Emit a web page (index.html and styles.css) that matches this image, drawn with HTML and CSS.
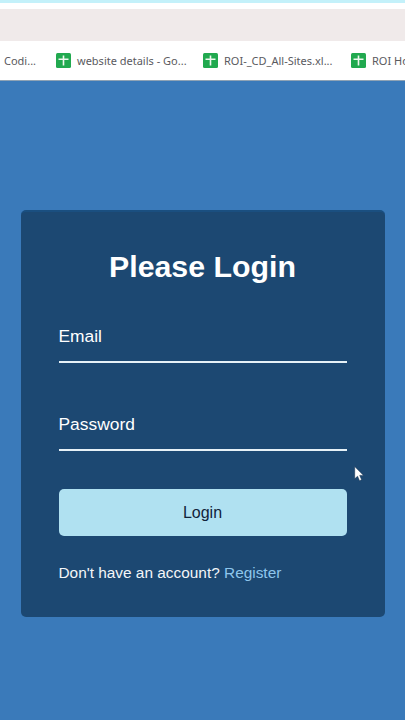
FILE: index.html
```html
<!DOCTYPE html>
<html lang="en">
<head>
<meta charset="utf-8">
<title>Please Login</title>
<link rel="stylesheet" href="styles.css">
</head>
<body>
<div class="chrome">
  <div class="strip"></div>
  <div class="address"></div>
  <div class="bookmarks">
    <span class="bm first"><span class="bm-text">Codi...</span></span>
    <span class="bm"><svg class="sheet" viewBox="0 0 15 15"><rect width="15" height="15" rx="1.5" fill="#21a94f"/><path d="M6.7 2.5h1.6v3h4.2v1.6H8.3v5.4H6.7V7.1H2.5V5.5h4.2z" fill="#eef7ee"/></svg><span class="bm-text">website details - Go...</span></span>
    <span class="bm"><svg class="sheet" viewBox="0 0 15 15"><rect width="15" height="15" rx="1.5" fill="#21a94f"/><path d="M6.7 2.5h1.6v3h4.2v1.6H8.3v5.4H6.7V7.1H2.5V5.5h4.2z" fill="#eef7ee"/></svg><span class="bm-text">ROI-_CD_All-Sites.xl...</span></span>
    <span class="bm"><svg class="sheet" viewBox="0 0 15 15"><rect width="15" height="15" rx="1.5" fill="#21a94f"/><path d="M6.7 2.5h1.6v3h4.2v1.6H8.3v5.4H6.7V7.1H2.5V5.5h4.2z" fill="#eef7ee"/></svg><span class="bm-text">ROI Ho</span></span>
  </div>
</div>
<main class="page">
  <form class="card">
    <h1 class="title">Please Login</h1>
    <label class="field"><span class="field-label">Email</span></label>
    <label class="field"><span class="field-label">Password</span></label>
    <button class="submit" type="button">Login</button>
    <p class="foot">Don't have an account? <a class="link" href="#">Register</a></p>
  </form>
  <svg class="cursor" viewBox="0 0 10 15"><path d="M.5.5v11.5l2.7-2.4 1.8 4.2 2-.9-1.8-4.1h3.6z" fill="#fff" stroke="#16324f" stroke-width=".5"/></svg>
</main>
</body>
</html>
```
FILE: styles.css
```css
* { box-sizing: border-box; }
html, body { margin: 0; height: 100%; }
body {
  width: 405px;
  height: 720px;
  overflow: hidden;
  display: flex;
  flex-direction: column;
  font-family: "Liberation Sans", Arial, sans-serif;
  background: #3a7aba;
}
.chrome { flex: none; height: 81px; background: #fff; display: flex; flex-direction: column; border-bottom: 1px solid #8fa3b5; }
.strip { height: 9px; background: #fff; border-top: 3px solid #c4f1fa; flex: none; }
.address { height: 32px; background: #f0eaea; flex: none; }
.bookmarks { flex: 1; display: flex; align-items: center; white-space: nowrap; overflow: hidden; font-family: "Noto Sans", "Open Sans", sans-serif; font-size: 11px; color: #5a5a60; padding-bottom: 1px; }
.bm { display: flex; align-items: center; flex: none; }
.bm.first { width: 56px; padding-left: 4px; }
.bm:nth-child(2) { width: 147px; }
.bm:nth-child(3) { width: 148px; }
.sheet { width: 15px; height: 15px; margin-right: 6px; flex: none; }
.bm-text { display: block; }
.page { position: relative; flex: 1; display: flex; justify-content: center; padding-top: 129px; }
.card {
  width: 364px;
  height: 407px;
  background: #1c4872;
  border-radius: 5px;
  border-top: 2px solid #1a4f80;
  padding: 0 38px;
  display: flex;
  flex-direction: column;
  color: #fff;
}
.title { margin: 38px 0 0; font-size: 30.3px; line-height: 34px; font-weight: 700; text-align: center; }
.field { display: flex; align-items: flex-start; height: 37px; border-bottom: 2px solid #e6f1f7; font-size: 17.4px; line-height: 20px; }
.title + .field { margin-top: 42px; }
.field + .field { margin-top: 51px; }
.submit {
  margin-top: 38px;
  height: 47px;
  flex: none;
  border: 0;
  border-radius: 5px;
  background: #b0e1f1;
  color: #10233a;
  font: 16px "Liberation Sans", Arial, sans-serif;
}
.foot { margin: 27px 0 0; font-size: 15.4px; line-height: 20px; color: #f4f6f8; }
.link { color: #8ec6ec; text-decoration: none; }
.cursor { position: absolute; left: 354px; top: 385px; width: 11px; height: 16px; }
```
